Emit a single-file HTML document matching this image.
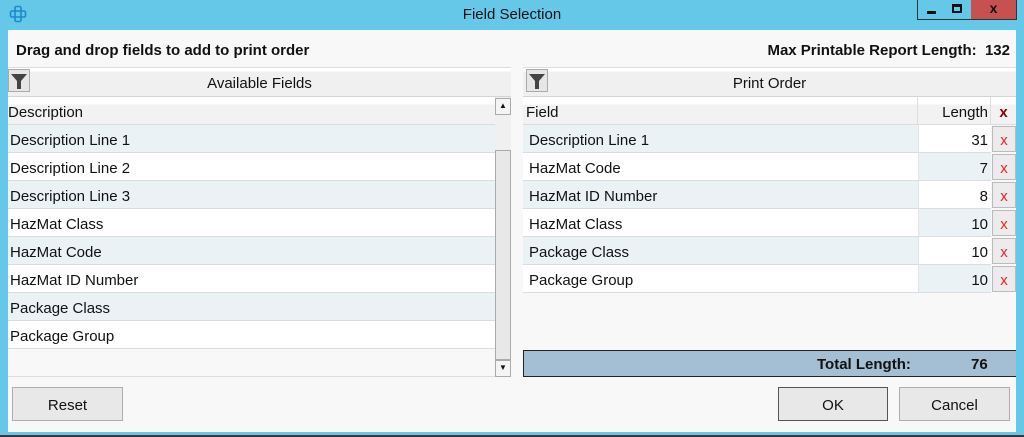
<!DOCTYPE html>
<html><head><style>
*{margin:0;padding:0;box-sizing:border-box}
body{width:1024px;height:437px;background:#3a3a3a;font-family:"Liberation Sans",sans-serif;font-size:15px;color:#111;position:relative;overflow:hidden}
.abs{position:absolute}
.win{left:0;top:0;width:1024px;height:435px;background:#66c8e9}
.content{left:8px;top:30px;width:1008px;height:402px;background:#f8f8f8}
.row{position:absolute;height:28px;line-height:31px;border-bottom:1px solid #dcdcdc;padding-left:2px;white-space:nowrap}
.alt{background:#eaf2f6}
.wh{background:#fff}
.btn{position:absolute;height:34px;background:#e8e8e8;border:1px solid #adadad;text-align:center;line-height:35px}
.hdr{position:absolute;height:30px;background:linear-gradient(#fff 0,#fff 3px,#f0f0f0 4px);border-top:1px solid #ddd;border-bottom:1px solid #d4d4d4;text-align:center;line-height:31px}
.filt{position:absolute;left:0;top:1px;width:22px;height:23px;border:1px solid #aaa;background:#e6e6e6;line-height:0}
.x{color:#e22;text-align:center}
</style></head><body>
<div class="abs win"></div>
<svg class="abs" style="left:9px;top:5px" width="18" height="18" viewBox="0 0 18 18"><g fill="none" stroke="#1e88c8" stroke-width="1.6"><rect x="6" y="1.5" width="6" height="15" rx="1.5"/><rect x="1.5" y="6" width="15" height="6" rx="1.5"/></g></svg>
<div class="abs" style="left:0;width:1024px;top:6px;text-align:center;font-size:15px;color:#111">Field Selection</div>
<div class="abs" style="left:917px;top:0;width:28px;height:20px;background:#66c8e9;border:1px solid #333;border-top:none"><div class="abs" style="left:9px;top:11px;width:9px;height:3px;background:#111"></div></div>
<div class="abs" style="left:944px;top:0;width:28px;height:20px;background:#66c8e9;border:1px solid #333;border-top:none;border-left:none"><div class="abs" style="left:8px;top:4px;width:10px;height:9px;border:2px solid #111;border-top-width:3px"></div></div>
<div class="abs" style="left:971px;top:0;width:46px;height:20px;background:#c75050;border:1px solid #333;border-top:none;border-left:none;text-align:center;font-weight:bold;font-size:14px;line-height:17px;color:#111">x</div>
<div class="abs content"></div>
<div class="abs" style="left:16px;top:42px;font-weight:bold;font-size:15px">Drag and drop fields to add to print order</div>
<div class="abs" style="right:14px;top:42px;font-weight:bold;font-size:15px">Max Printable Report Length:&nbsp; 132</div>
<div class="hdr" style="left:8px;top:67px;width:503px">Available Fields<div class="filt"><svg width="20" height="21" viewBox="0 0 20 21"><path d="M2 4h16l-6 7v8h-4v-8z" fill="#444"/></svg></div></div>
<div class="abs" style="left:8px;top:97px;width:487px;height:280px;background:#f8f8f8"></div>
<div class="row" style="left:8px;top:97px;width:487px;background:linear-gradient(#fff 0,#fff 7px,#f2f2f2 8px);padding-left:0">Description</div>
<div class="row alt" style="left:8px;top:125px;width:487px">Description Line 1</div>
<div class="row wh" style="left:8px;top:153px;width:487px">Description Line 2</div>
<div class="row alt" style="left:8px;top:181px;width:487px">Description Line 3</div>
<div class="row wh" style="left:8px;top:209px;width:487px">HazMat Class</div>
<div class="row alt" style="left:8px;top:237px;width:487px">HazMat Code</div>
<div class="row wh" style="left:8px;top:265px;width:487px">HazMat ID Number</div>
<div class="row alt" style="left:8px;top:293px;width:487px">Package Class</div>
<div class="row wh" style="left:8px;top:321px;width:487px">Package Group</div>
<div class="abs" style="left:8px;top:376px;width:503px;height:1px;background:#ddd"></div>
<div class="abs" style="left:495px;top:97px;width:16px;height:280px;background:#f0f0f0"></div>
<div class="abs" style="left:495px;top:98px;width:16px;height:17px;border:1px solid #aaa;background:#f4f4f4;font-size:8px;text-align:center;line-height:14px">▲</div>
<div class="abs" style="left:495px;top:150px;width:16px;height:210px;border:1px solid #aaa;background:#e8e8e8"></div>
<div class="abs" style="left:495px;top:360px;width:16px;height:17px;border:1px solid #aaa;background:#f4f4f4;font-size:8px;text-align:center;line-height:14px">▼</div>
<div class="hdr" style="left:523px;top:67px;width:493px">Print Order<div class="filt" style="left:3px"><svg width="20" height="21" viewBox="0 0 20 21"><path d="M2 4h16l-6 7v8h-4v-8z" fill="#444"/></svg></div></div>
<div class="row" style="left:523px;top:97px;width:395px;background:linear-gradient(#fff 0,#fff 7px,#f2f2f2 8px);padding-left:3px;border-right:1px solid #ddd">Field</div>
<div class="row" style="left:918px;top:97px;width:73px;background:linear-gradient(#fff 0,#fff 7px,#f2f2f2 8px);text-align:right;padding-right:2px;border-right:1px solid #ddd">Length</div>
<div class="row" style="left:991px;top:97px;width:25px;background:linear-gradient(#fff 0,#fff 7px,#f2f2f2 8px);color:#8b0000;font-weight:bold;text-align:center;padding:0">x</div>
<div class="abs" style="left:523px;top:350px;width:493px;height:27px;background:#a4bed3;border:1px solid #222;border-right:none;font-weight:bold;line-height:27px"><span class="abs" style="left:293px">Total Length:</span><span class="abs" style="left:447px">76</span></div>
<div class="btn" style="left:12px;top:387px;width:111px">Reset</div>
<div class="btn" style="left:778px;top:387px;width:110px;border-color:#555">OK</div>
<div class="btn" style="left:899px;top:387px;width:111px">Cancel</div>
<div class="row alt" style="left:523px;top:125px;width:395px;padding-left:6px">Description Line 1</div>
<div class="row wh" style="left:523px;top:153px;width:395px;padding-left:6px">HazMat Code</div>
<div class="row alt" style="left:523px;top:181px;width:395px;padding-left:6px">HazMat ID Number</div>
<div class="row wh" style="left:523px;top:209px;width:395px;padding-left:6px">HazMat Class</div>
<div class="row alt" style="left:523px;top:237px;width:395px;padding-left:6px">Package Class</div>
<div class="row wh" style="left:523px;top:265px;width:395px;padding-left:6px">Package Group</div>
<div class="row wh" style="left:918px;top:125px;width:73px;text-align:right;padding-right:3px;border-left:1px solid #e4e4e4">31</div>
<div class="row alt" style="left:918px;top:153px;width:73px;text-align:right;padding-right:3px;border-left:1px solid #e4e4e4">7</div>
<div class="row wh" style="left:918px;top:181px;width:73px;text-align:right;padding-right:3px;border-left:1px solid #e4e4e4">8</div>
<div class="row alt" style="left:918px;top:209px;width:73px;text-align:right;padding-right:3px;border-left:1px solid #e4e4e4">10</div>
<div class="row wh" style="left:918px;top:237px;width:73px;text-align:right;padding-right:3px;border-left:1px solid #e4e4e4">10</div>
<div class="row alt" style="left:918px;top:265px;width:73px;text-align:right;padding-right:3px;border-left:1px solid #e4e4e4">10</div>
<div class="abs x" style="left:992px;top:126px;width:24px;height:26px;border:1px solid #bbb;background:#ececec;line-height:28px">x</div>
<div class="abs x" style="left:992px;top:154px;width:24px;height:26px;border:1px solid #bbb;background:#ececec;line-height:28px">x</div>
<div class="abs x" style="left:992px;top:182px;width:24px;height:26px;border:1px solid #bbb;background:#ececec;line-height:28px">x</div>
<div class="abs x" style="left:992px;top:210px;width:24px;height:26px;border:1px solid #bbb;background:#ececec;line-height:28px">x</div>
<div class="abs x" style="left:992px;top:238px;width:24px;height:26px;border:1px solid #bbb;background:#ececec;line-height:28px">x</div>
<div class="abs x" style="left:992px;top:266px;width:24px;height:26px;border:1px solid #bbb;background:#ececec;line-height:28px">x</div>
</body></html>
